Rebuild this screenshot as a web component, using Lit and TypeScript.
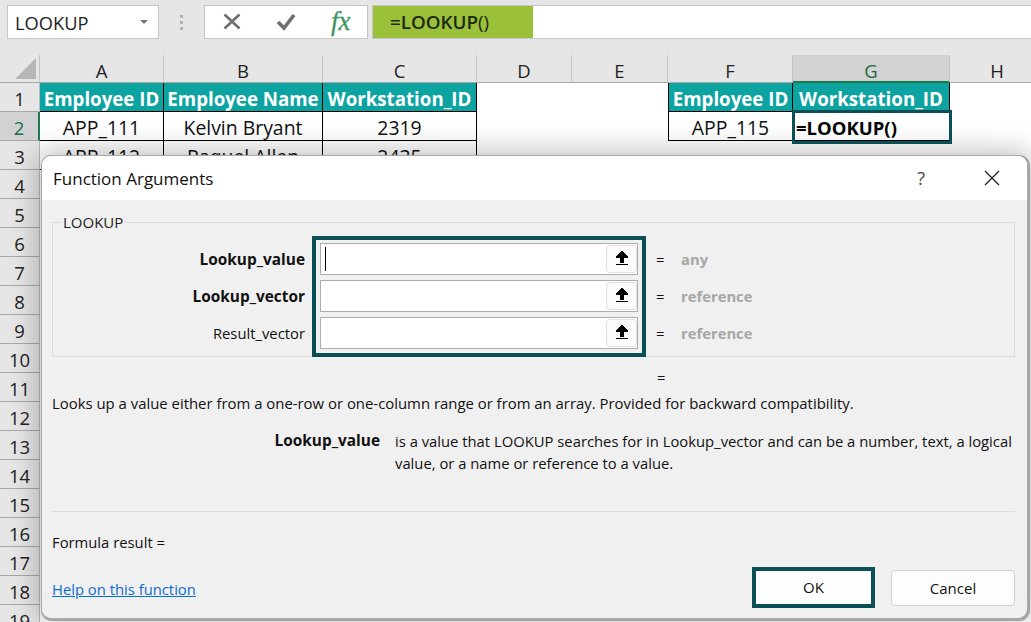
import { LitElement, css, html } from 'lit';
import { customElement } from 'lit/decorators.js';

const COLS = ['A', 'B', 'C', 'D', 'E', 'F', 'G', 'H'];
const ROWS = Array.from({ length: 19 }, (_, i) => i + 1);

// row number -> column letter -> text, everything else on the sheet is empty
const CELLS: Record<number, Record<string, string>> = {
  1: { A: 'Employee ID', B: 'Employee Name', C: 'Workstation_ID', F: 'Employee ID', G: 'Workstation_ID' },
  2: { A: 'APP_111', B: 'Kelvin Bryant', C: '2319', F: 'APP_115', G: '=LOOKUP()' },
  3: { A: 'APP_112', B: 'Raquel Allen', C: '2435' },
};

const ARGS = [
  { name: 'Lookup_value', type: 'any', bold: true, caret: true },
  { name: 'Lookup_vector', type: 'reference', bold: true, caret: false },
  { name: 'Result_vector', type: 'reference', bold: false, caret: false },
];

@customElement('app-root')
export class AppRoot extends LitElement {
  static styles = css`
    :host {
      display: block;
      width: 100%;
      height: 622px;
      position: relative;
      overflow: hidden;
      background: #fff;
      font-family: 'Open Sans', 'Noto Sans', sans-serif;
      color: #111;
    }

    /* formula bar */
    .ribbon {
      height: 55px;
      box-sizing: border-box;
      padding: 5px 0 16px 7px;
      background: #e6e6e6;
      display: flex;
    }
    .namebox {
      width: 152px;
      box-sizing: border-box;
      background: #fff;
      border: 1px solid #c6c6c6;
      display: flex;
      align-items: center;
      justify-content: space-between;
      padding: 0 10px 0 7px;
      font-size: 18.3px;
      color: #222;
    }
    .drop {
      width: 0;
      height: 0;
      border-left: 4px solid transparent;
      border-right: 4px solid transparent;
      border-top: 4px solid #777;
    }
    .grip {
      width: 45px;
      display: flex;
      flex-direction: column;
      align-items: center;
      justify-content: center;
      gap: 3px;
    }
    .grip i {
      width: 3px;
      height: 3px;
      background: #b4b4b4;
    }
    .tools {
      width: 164px;
      box-sizing: border-box;
      background: #fff;
      border: 1px solid #c6c6c6;
      display: flex;
      align-items: center;
      padding-left: 17px;
      gap: 34px;
    }
    .fx {
      font-family: 'Liberation Serif', serif;
      font-style: italic;
      font-size: 27px;
      line-height: 30px;
      color: #3f9464;
      -webkit-text-stroke: 0.3px #3f9464;
      margin: -2px 0 0 1px;
    }
    .formula {
      flex: 1;
      margin-left: 4px;
      background: #fff;
      border: 1px solid #c6c6c6;
      border-right: 0;
      display: flex;
    }
    .formula span {
      width: 160px;
      box-sizing: border-box;
      padding-left: 17px;
      background: #9bc03a;
      font-size: 18.8px;
      line-height: 32px;
      color: #1d2a10;
    }
    .formula b {
      font-weight: 600;
    }

    /* sheet */
    .sheet {
      display: grid;
      grid-template-columns: 40px 124px 159px 154px 95px 96px 125px 157px 95px;
      grid-template-rows: 28px repeat(19, 29px);
    }
    .corner {
      background: #e6e6e6;
      border-bottom: 1px solid #a8a8a8;
      border-right: 1px solid #c4c4c4;
      position: relative;
    }
    .corner::after {
      content: '';
      position: absolute;
      right: 3px;
      bottom: 3px;
      border-left: 21px solid transparent;
      border-bottom: 21px solid #b6b6b6;
    }
    .colhead {
      background: #e6e6e6;
      border-bottom: 1px solid #a8a8a8;
      border-right: 1px solid #c4c4c4;
      box-sizing: border-box;
      text-align: center;
      font-size: 18.5px;
      line-height: 32px;
      color: #222;
    }
    .colhead.sel {
      background: #d2d2d2;
      color: #1c6b42;
      border-bottom: 2px solid #1c7c4c;
    }
    .rowhead {
      background: #e6e6e6;
      border-bottom: 1px solid #a8a8a8;
      border-right: 1px solid #bbb;
      box-sizing: border-box;
      text-align: center;
      font-size: 18.5px;
      line-height: 31px;
      color: #222;
    }
    .rowhead.sel {
      background: #d2d2d2;
      color: #1c6b42;
      border-right: 2px solid #1c7c4c;
    }
    .cell {
      box-sizing: border-box;
      text-align: center;
      font-size: 19.4px;
      line-height: 31px;
      white-space: nowrap;
      overflow: hidden;
      color: #111;
    }
    .cell.line {
      border-right: 1px solid #000;
      border-bottom: 1px solid #000;
    }
    .cell.left {
      border-left: 1px solid #000;
    }
    .cell.head {
      background: #0ca3a0;
      color: #fff;
      font-weight: 700;
      font-size: 18.7px;
    }
    .cell.active {
      position: relative;
      overflow: visible;
      text-align: left;
      padding-left: 3px;
      font-weight: 700;
      font-size: 18.5px;
      z-index: 1;
      color: #000;
    }
    .cell.active::after {
      content: '';
      position: absolute;
      inset: -2px -3px -4px -1px;
      border: 3px solid #0b4f56;
    }

    /* dialog */
    .dialog {
      position: absolute;
      left: 42px;
      top: 156px;
      width: 985px;
      height: 462px;
      box-sizing: border-box;
      border-radius: 9px;
      overflow: hidden;
      background: #f0f0f0;
      display: flex;
      flex-direction: column;
      font-size: 14.8px;
      color: #111;
    }
    .frame {
      position: absolute;
      left: 42px;
      top: 156px;
      width: 985px;
      height: 462px;
      box-sizing: border-box;
      border-radius: 9px;
      box-shadow: 0 0 0 1px #aaa, 1px 1px 0 2px #a4a4a4, 0 0 28px 4px rgba(0, 0, 0, 0.28);
    }
    .title {
      height: 44px;
      flex: none;
      background: #fff;
      display: flex;
      align-items: center;
      padding: 0 27px 0 11px;
      font-size: 17px;
    }
    .title .name {
      flex: 1;
    }
    .title .help {
      font-size: 18px;
      color: #444;
      margin-right: 59px;
    }
    .body {
      flex: 1;
      display: flex;
      flex-direction: column;
      padding: 0 12px 0 10px;
    }
    fieldset {
      margin: 14px 0 0;
      padding: 6px 0 0;
      height: 143px;
      box-sizing: border-box;
      border: 1px solid #dcdcdc;
      min-width: 0;
    }
    legend {
      margin-left: 9px;
      padding: 0 1px;
      font-size: 15px;
      line-height: 16px;
      color: #222;
    }
    .args {
      display: grid;
      grid-template-columns: 259px auto 1fr;
      grid-template-rows: 121px;
    }
    .labels {
      display: flex;
      flex-direction: column;
      padding: 8px 7px 0 0;
      gap: 6px;
      align-items: flex-end;
    }
    .labels div {
      height: 31px;
      line-height: 31px;
    }
    .labels .strong {
      font-weight: 700;
      font-size: 15.4px;
    }
    .hl {
      width: 334px;
      height: 121px;
      box-sizing: border-box;
      border: 4px solid #0b4f56;
      padding: 3px 4px 3px 4px;
      display: flex;
      flex-direction: column;
      gap: 5.5px;
    }
    .input {
      height: 31.5px;
      flex: none;
      box-sizing: border-box;
      background: #fff;
      border: 1px solid #adadad;
      display: flex;
      align-items: center;
      justify-content: space-between;
      padding: 1px 0 1px 4px;
    }
    .input .caret {
      width: 1px;
      height: 24px;
      background: #000;
    }
    .up {
      margin-left: auto;
      width: 31px;
      height: 28px;
      box-sizing: border-box;
      background: #fbfbfb;
      border: 1px solid #e0e0e0;
      border-radius: 4px;
      display: flex;
      align-items: center;
      justify-content: center;
    }
    .types {
      display: flex;
      flex-direction: column;
      padding-top: 8px;
      gap: 6px;
    }
    .types div {
      height: 31px;
      line-height: 31px;
      display: flex;
    }
    .eq {
      width: 25px;
      margin-left: 10px;
      flex: none;
    }
    .types b {
      color: #a6a6a6;
      font-weight: 700;
    }
    .lone {
      padding-left: 605px;
      height: 20px;
      line-height: 20px;
      margin-top: 10px;
    }
    .desc {
      margin-top: 6px;
      line-height: 20px;
      height: 20px;
      white-space: nowrap;
      font-size: 14.9px;
    }
    .detail {
      display: grid;
      grid-template-columns: 328px 1fr;
      column-gap: 15px;
      margin-top: 17px;
      line-height: 22px;
      height: 81px;
    }
    .detail b {
      text-align: right;
      font-weight: 700;
      font-size: 15.4px;
    }
    .rule {
      height: 1px;
      background: #dcdcdc;
      flex: none;
    }
    .result {
      margin-top: 20px;
      line-height: 20px;
    }
    .foot {
      display: flex;
      align-items: center;
      margin-top: 15px;
    }
    .foot a {
      color: #0b6ecf;
      text-decoration: underline;
      flex: 1;
      margin-top: 2px;
    }
    .btn {
      box-sizing: border-box;
      background: #fdfdfd;
      text-align: center;
      border-radius: 4px;
      border: 1px solid #d0d0d0;
      width: 124px;
      height: 36px;
      line-height: 34px;
      font-size: 15px;
    }
    .btn.ok {
      width: 123px;
      height: 41px;
      line-height: 33px;
      border: 4px solid #0b4f56;
      border-radius: 0;
      margin-right: 16px;
    }
  `;

  cellClass(r: number, c: string) {
    const filled = CELLS[r]?.[c] !== undefined;
    if (!filled) return 'cell';
    let cls = 'cell line';
    if (r === 1) cls += ' head';
    if (c === 'F') cls += ' left';
    if (r === 2 && c === 'G') cls += ' active';
    return cls;
  }

  arrow() {
    return html`<svg width="14" height="18" viewBox="0 0 14 18" shape-rendering="crispEdges">
      <path d="M6 1h2v1h1v1h1v1h1v1h1v1h1v2h-4v5H5V8H1V6h1V5h1V4h1V3h1V2h1z" fill="#000" />
      <path d="M1 14h12v1H1z" fill="#000" />
    </svg>`;
  }

  render() {
    return html`
      <div class="ribbon">
        <div class="namebox">LOOKUP<span class="drop"></span></div>
        <div class="grip"><i></i><i></i><i></i></div>
        <div class="tools">
          <svg width="20" height="20" viewBox="0 0 20 20"><path d="M2.5 2.5l15 14M17.5 2.5l-15 14" stroke="#6f6f6f" stroke-width="2.6" fill="none" /></svg>
          <svg width="20" height="20" viewBox="0 0 20 20"><path d="M2 10l6 6L18 3" stroke="#6f6f6f" stroke-width="3.6" fill="none" /></svg>
          <span class="fx">fx</span>
        </div>
        <div class="formula"><span><b>=LOOKUP</b>()</span></div>
      </div>

      <div class="sheet">
        <div class="corner"></div>
        ${COLS.map((c) => html`<div class="colhead ${c === 'G' ? 'sel' : ''}">${c}</div>`)}
        ${ROWS.map(
          (r) => html`
            <div class="rowhead ${r === 2 ? 'sel' : ''}">${r}</div>
            ${COLS.map((c) => html`<div class=${this.cellClass(r, c)}>${CELLS[r]?.[c] ?? ''}</div>`)}
          `,
        )}
      </div>

      <div class="frame"></div>
      <div class="dialog">
        <div class="title">
          <span class="name">Function Arguments</span>
          <span class="help">?</span>
          <svg width="16" height="16" viewBox="0 0 16 16"><path d="M1 1l14 14M15 1L1 15" stroke="#222" stroke-width="1.3" fill="none" /></svg>
        </div>
        <div class="body">
          <fieldset>
            <legend>LOOKUP</legend>
            <div class="args">
              <div class="labels">
                ${ARGS.map((a) => html`<div class=${a.bold ? 'strong' : ''}>${a.name}</div>`)}
              </div>
              <div class="hl">
                ${ARGS.map(
                  (a) => html`<div class="input">
                    ${a.caret ? html`<span class="caret"></span>` : ''}
                    <span class="up">${this.arrow()}</span>
                  </div>`,
                )}
              </div>
              <div class="types">
                ${ARGS.map((a) => html`<div><span class="eq">=</span><b>${a.type}</b></div>`)}
              </div>
            </div>
          </fieldset>
          <div class="lone">=</div>
          <div class="desc">Looks up a value either from a one-row or one-column range or from an array. Provided for backward compatibility.</div>
          <div class="detail">
            <b>Lookup_value</b>
            <span>is a value that LOOKUP searches for in Lookup_vector and can be a number, text, a logical value, or a name or reference to a value.</span>
          </div>
          <div class="rule"></div>
          <div class="result">Formula result =</div>
          <div class="foot">
            <a>Help on this function</a>
            <div class="btn ok">OK</div>
            <div class="btn">Cancel</div>
          </div>
        </div>
      </div>
    `;
  }
}
